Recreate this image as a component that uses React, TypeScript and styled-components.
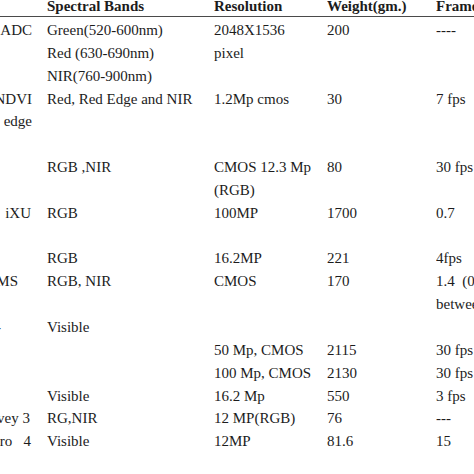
import React from "react";
import styled, { createGlobalStyle } from "styled-components";

const GlobalStyle = createGlobalStyle`
  html, body {
    margin: 0;
    padding: 0;
    background: #fff;
    overflow: hidden;
  }
`;

const LINE = 22.85;

const Page = styled.div`
  width: 474px;
  height: 474px;
  overflow: hidden;
  font-family: "Liberation Serif", "Times New Roman", serif;
  font-size: 15px;
  line-height: ${LINE}px;
  color: #1c1c1c;
`;

const Grid = styled.div`
  display: grid;
  grid-template-columns: 47px 167px 113px 109px 1fr;
`;

const HeadCell = styled.div`
  font-weight: bold;
  white-space: nowrap;
  overflow: hidden;
  line-height: 12px;
  height: 16px;
  border-bottom: 1px solid #4a4a4a;
  margin-bottom: 2px;
`;

const Cell = styled.div<{ $lines: number }>`
  min-height: ${(p) => p.$lines * LINE}px;
  white-space: nowrap;
  overflow: hidden;
  display: flex;
  flex-direction: column;
  align-items: flex-start;
`;

const NameCell = styled(Cell)<{ $end: number }>`
  align-items: flex-end;
  padding-right: ${(p) => 47 - p.$end}px;
`;

type Row = {
  name: string[];
  nameEnd?: number;
  bands: string[];
  res: string[];
  weight: string;
  frame: string[];
  lines: number;
};

const sp = "\u00a0";

const rows: Row[] = [
  { name: ["Tetracam" + sp + sp + "ADC"], bands: ["Green(520-600nm)", "Red (630-690nm)", "NIR(760-900nm)"], res: ["2048X1536", "pixel"], weight: "200", frame: ["----"], lines: 3 },
  { name: ["Sentera NDVI", "edge"], bands: ["Red, Red Edge and NIR"], res: ["1.2Mp cmos"], weight: "30", frame: ["7 fps"], lines: 3 },
  { name: [], bands: ["RGB ,NIR"], res: ["CMOS" + sp + "12.3" + sp + "Mp", "(RGB)"], weight: "80", frame: ["30 fps"], lines: 2 },
  { name: ["Phase One\u2003\u2003iXU"], nameEnd: 31, bands: ["RGB"], res: ["100MP"], weight: "1700", frame: ["0.7"], lines: 2 },
  { name: [], bands: ["RGB"], res: ["16.2MP"], weight: "221", frame: ["4fps"], lines: 1 },
  { name: ["Parrot Sequoia MS"], nameEnd: 18, bands: ["RGB, NIR"], res: ["CMOS"], weight: "170", frame: ["1.4" + sp + sp + "(0.5 s)", "between"], lines: 2 },
  { name: ["Hasselblad A6D-"], nameEnd: 1, bands: ["Visible"], res: [], weight: "", frame: [], lines: 1 },
  { name: [], bands: [], res: ["50 Mp, CMOS"], weight: "2115", frame: ["30 fps"], lines: 1 },
  { name: [], bands: [], res: ["100 Mp, CMOS"], weight: "2130", frame: ["30 fps"], lines: 1 },
  { name: [], bands: ["Visible"], res: ["16.2 Mp"], weight: "550", frame: ["3 fps"], lines: 1 },
  { name: ["MAPIR Survey 3"], nameEnd: 30, bands: ["RG,NIR"], res: ["12 MP(RGB)"], weight: "76", frame: ["---"], lines: 1 },
  { name: ["Phantom Pro" + sp + sp + sp + "4"], nameEnd: 31, bands: ["Visible"], res: ["12MP"], weight: "81.6", frame: ["15"], lines: 1 },
];

const Lines = ({ items }: { items: string[] }) => (
  <>
    {items.map((t, i) => (
      <span key={i}>{t}</span>
    ))}
  </>
);

export default function App() {
  return (
    <>
      <GlobalStyle />
      <Page>
        <Grid>
          <HeadCell />
          <HeadCell>Spectral Bands</HeadCell>
          <HeadCell>Resolution</HeadCell>
          <HeadCell>Weight(gm.)</HeadCell>
          <HeadCell>Frame Rate</HeadCell>
          {rows.map((r, i) => (
            <React.Fragment key={i}>
              <NameCell $lines={r.lines} $end={r.nameEnd ?? 32}>
                <Lines items={r.name} />
              </NameCell>
              <Cell $lines={r.lines}>
                <Lines items={r.bands} />
              </Cell>
              <Cell $lines={r.lines}>
                <Lines items={r.res} />
              </Cell>
              <Cell $lines={r.lines}>
                <Lines items={r.weight ? [r.weight] : []} />
              </Cell>
              <Cell $lines={r.lines}>
                <Lines items={r.frame} />
              </Cell>
            </React.Fragment>
          ))}
        </Grid>
      </Page>
    </>
  );
}
